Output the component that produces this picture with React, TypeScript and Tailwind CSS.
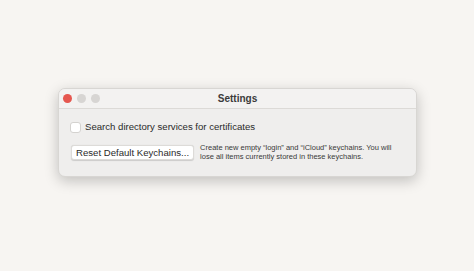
import React, { useState } from "react";

/* macOS style settings window */
export default function App() {
  const [checked, setChecked] = useState(false);

  return (
    <div
      className="w-[474px] h-[271px] bg-[#f7f5f2] flex items-start pt-[88px] pl-[58px]"
      style={{ fontFamily: '"Liberation Sans", Arial, sans-serif' }}
    >
      <div className="w-[359px] h-[89px] rounded-[7px] bg-[#efeeed] border border-[#d8d6d3] shadow-[0_4px_14px_rgba(0,0,0,0.22)] flex flex-col overflow-hidden">
        {/* title bar */}
        <div className="h-[20px] flex items-center relative border-b border-[#dcdad7] bg-[#f3f2f1]">
          <div className="flex items-center gap-[5px] pl-[4px]">
            <span className="w-[9px] h-[9px] rounded-full bg-[#e5574f]" />
            <span className="w-[9px] h-[9px] rounded-full bg-[#d7d5d3]" />
            <span className="w-[9px] h-[9px] rounded-full bg-[#d7d5d3]" />
          </div>
          <div className="absolute inset-0 flex items-center justify-center text-[10px] font-bold text-[#3b3b3b]">
            Settings
          </div>
        </div>

        {/* body */}
        <div className="flex flex-col pl-[11px] pr-[12px] pt-[11px] gap-[9px]">
          <label className="flex items-center gap-[4px] cursor-pointer">
            <span
              onClick={() => setChecked(!checked)}
              className="w-[11px] h-[11px] rounded-[3px] bg-white border border-[#d4d2cf] flex items-center justify-center"
            >
              {checked && (
                <svg viewBox="0 0 10 10" className="w-[8px] h-[8px]">
                  <path d="M2 5.2 L4.2 7.3 L8 2.8" fill="none" stroke="#333" strokeWidth="1.5" />
                </svg>
              )}
            </span>
            <span className="text-[9.6px] text-[#2a2a2a]">Search directory services for certificates</span>
          </label>

          <div className="flex items-center gap-[6px] pl-[1px]">
            <button className="h-[15px] px-[4px] rounded-[3px] bg-white border border-[#dddbd8] shadow-[0_0.5px_1px_rgba(0,0,0,0.15)] text-[9.6px] text-[#2a2a2a] leading-none whitespace-nowrap">
              Reset Default Keychains...
            </button>
            <p className="text-[7.5px] leading-[9px] text-[#3a3a3a]">
              Create new empty “login” and “iCloud” keychains. You will
              <br />
              lose all items currently stored in these keychains.
            </p>
          </div>
        </div>
      </div>
    </div>
  );
}
